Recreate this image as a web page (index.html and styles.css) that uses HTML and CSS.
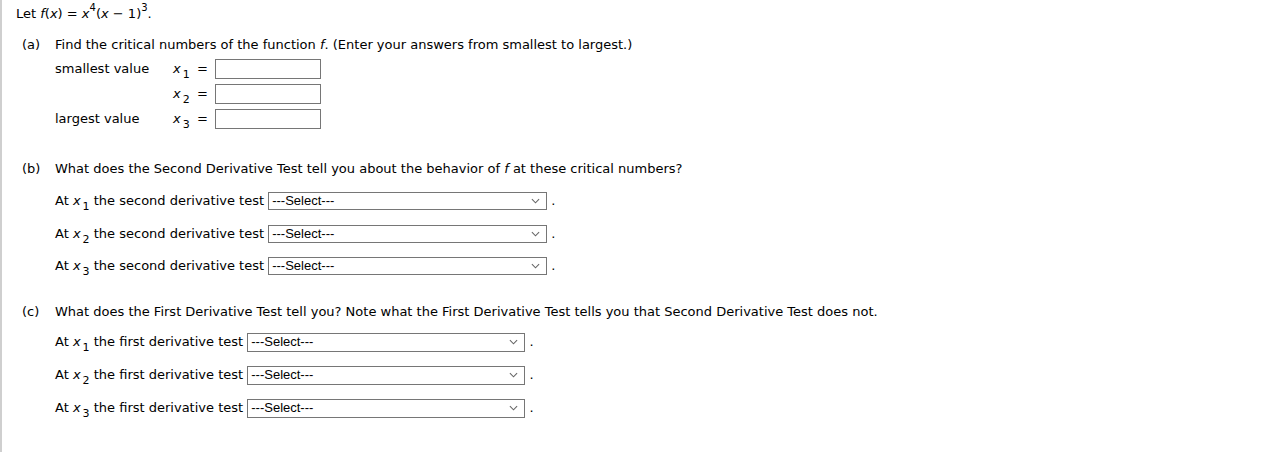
FILE: index.html
```html
<!DOCTYPE html>
<html>
<head>
<meta charset="utf-8">
<link rel="stylesheet" href="styles.css">
</head>
<body>
<div class="page">
  <p class="stem">Let <i>f</i>(<i>x</i>) = <i>x</i><sup>4</sup>(<i>x</i> − 1)<sup>3</sup>.</p>

  <div class="part part-a">
    <span class="plabel">(a)</span>
    <div class="pbody">
      <p class="q">Find the critical numbers of the function <i>f</i>. (Enter your answers from smallest to largest.)</p>
      <div class="answers">
        <span class="alabel">smallest value</span>
        <span class="var"><i>x</i><sub>1</sub></span><span class="eq">=</span><span class="box"></span>
        <span class="alabel"></span>
        <span class="var"><i>x</i><sub>2</sub></span><span class="eq">=</span><span class="box"></span>
        <span class="alabel">largest value</span>
        <span class="var"><i>x</i><sub>3</sub></span><span class="eq">=</span><span class="box"></span>
      </div>
    </div>
  </div>

  <div class="part part-b">
    <span class="plabel">(b)</span>
    <div class="pbody">
      <p class="q">What does the Second Derivative Test tell you about the behavior of <i>f</i> at these critical numbers?</p>
      <div class="rows">
        <div class="row">At <i>x</i><sub>1</sub> the second derivative test <span class="sel sel-b">---Select---<svg class="chev" viewBox="0 0 10 6"><path d="M1 1 L5 5 L9 1" fill="none" stroke="#666" stroke-width="1.2"/></svg></span> .</div>
        <div class="row">At <i>x</i><sub>2</sub> the second derivative test <span class="sel sel-b">---Select---<svg class="chev" viewBox="0 0 10 6"><path d="M1 1 L5 5 L9 1" fill="none" stroke="#666" stroke-width="1.2"/></svg></span> .</div>
        <div class="row">At <i>x</i><sub>3</sub> the second derivative test <span class="sel sel-b">---Select---<svg class="chev" viewBox="0 0 10 6"><path d="M1 1 L5 5 L9 1" fill="none" stroke="#666" stroke-width="1.2"/></svg></span> .</div>
      </div>
    </div>
  </div>

  <div class="part part-c">
    <span class="plabel">(c)</span>
    <div class="pbody">
      <p class="q">What does the First Derivative Test tell you? Note what the First Derivative Test tells you that Second Derivative Test does not.</p>
      <div class="rows rows-c">
        <div class="row">At <i>x</i><sub>1</sub> the first derivative test <span class="sel sel-c">---Select---<svg class="chev" viewBox="0 0 10 6"><path d="M1 1 L5 5 L9 1" fill="none" stroke="#666" stroke-width="1.2"/></svg></span> .</div>
        <div class="row">At <i>x</i><sub>2</sub> the first derivative test <span class="sel sel-c">---Select---<svg class="chev" viewBox="0 0 10 6"><path d="M1 1 L5 5 L9 1" fill="none" stroke="#666" stroke-width="1.2"/></svg></span> .</div>
        <div class="row">At <i>x</i><sub>3</sub> the first derivative test <span class="sel sel-c">---Select---<svg class="chev" viewBox="0 0 10 6"><path d="M1 1 L5 5 L9 1" fill="none" stroke="#666" stroke-width="1.2"/></svg></span> .</div>
      </div>
    </div>
  </div>
</div>
</body>
</html>
```
FILE: styles.css
```css
html, body {
  margin: 0;
  padding: 0;
  background: #fff;
}
body {
  font-family: "DejaVu Sans", Verdana, sans-serif;
  font-size: 13px;
  color: #000;
}
p { margin: 0; }
.page {
  border-left: 2px solid #cfcfcf;
  min-height: 452px;
  box-sizing: border-box;
  padding: 6px 0 0 14px;
}
.stem, .q, .alabel, .var, .eq { line-height: 16px; }
sup { font-size: 10px; line-height: 0; vertical-align: 7px; }
sub { font-size: 11px; line-height: 0; vertical-align: -5px; margin-left: 2px; }
.part {
  display: flex;
  margin-left: 6px;
}
.part-a { margin-top: 15px; }
.part-b { margin-top: 32px; }
.part-c { margin-top: 29px; }
.plabel { width: 33px; flex: none; line-height: 16px; }
.answers {
  display: grid;
  grid-template-columns: 118px 23px 19px 106px;
  grid-auto-rows: 20px;
  row-gap: 5px;
  align-items: center;
  margin-top: 6px;
}
.eq { padding-left: 1px; }
.box {
  display: block;
  height: 20px;
  box-sizing: border-box;
  border: 1px solid #767676;
}
.rows {
  display: flex;
  flex-direction: column;
  gap: 14.5px;
  margin-top: 15px;
}
.rows-c {
  margin-top: 13px;
  gap: 14px;
}
.rows-c .row, .rows-c .sel { height: 19px; }
.row {
  display: block;
  height: 18px;
  line-height: 18px;
  white-space: nowrap;
}
.sel {
  position: relative;
  display: inline-block;
  vertical-align: top;
  box-sizing: border-box;
  height: 18px;
  line-height: 16px;
  border: 1px solid #767676;
  font-family: "Liberation Sans", Arial, sans-serif;
  font-size: 13px;
  padding-left: 3px;
  margin-left: 0;
}
.sel-b { width: 279px; }
.sel-c { width: 278px; }
.chev {
  position: absolute;
  right: 6px;
  top: 5px;
  width: 9px;
  height: 6px;
}
```
